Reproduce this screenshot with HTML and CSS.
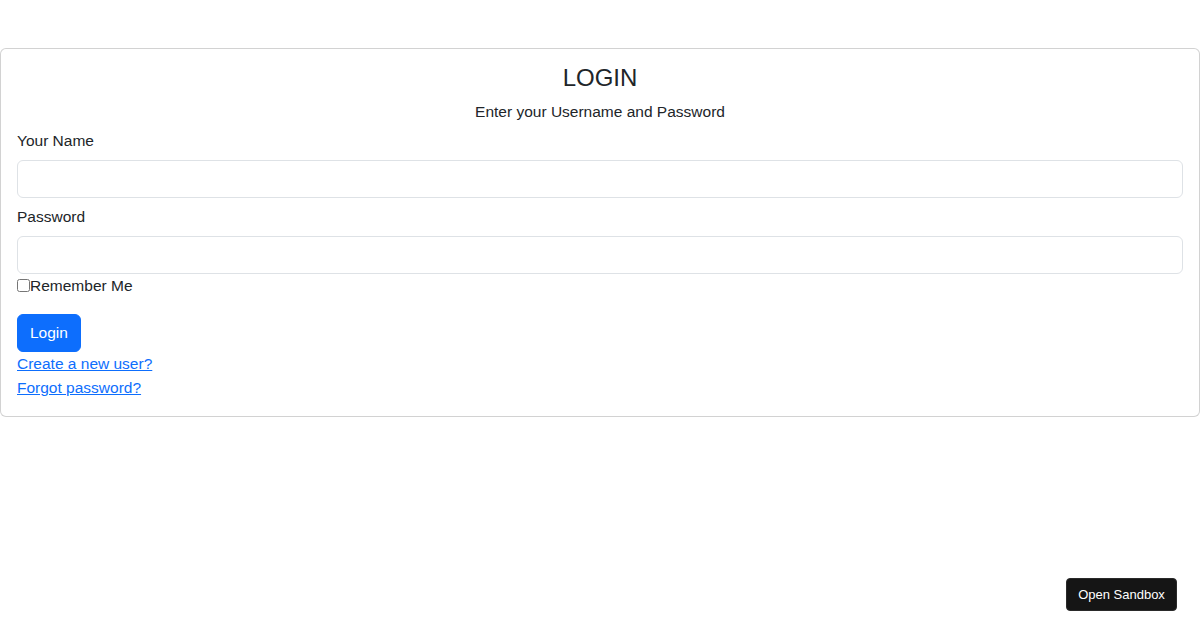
FILE: index.html
```html
<!DOCTYPE html>
<html lang="en">
<head>
<meta charset="utf-8">
<title>Login</title>
<link rel="stylesheet" href="styles.css">
</head>
<body>
<div class="page">
  <div class="card">
    <div class="card-body">
      <h3 class="title">LOGIN</h3>
      <p class="subtitle">Enter your Username and Password</p>
      <form class="form">
        <label class="form-label" for="name">Your Name</label>
        <input class="form-control" id="name" type="text">
        <label class="form-label" for="pw">Password</label>
        <input class="form-control" id="pw" type="password">
        <div class="remember"><input type="checkbox" id="rem" class="check"><label for="rem">Remember Me</label></div>
        <button type="button" class="btn">Login</button>
      </form>
      <a class="link" href="#">Create a new user?</a>
      <a class="link" href="#">Forgot password?</a>
    </div>
  </div>
</div>
<button type="button" class="sandbox">Open Sandbox</button>
</body>
</html>
```
FILE: styles.css
```css
* { box-sizing: border-box; }
html, body { margin: 0; padding: 0; }
body {
  font-family: "Liberation Sans", Arial, sans-serif;
  font-size: 15.5px;
  line-height: 24px;
  color: #212529;
  background: #fff;
}
.page { padding-top: 48px; }
.card {
  border: 1px solid rgba(0,0,0,0.175);
  border-radius: 6px;
  background: #fff;
}
.card-body { padding: 15px 16px 16px; }
.title {
  margin: 0 0 7px;
  font-size: 24px;
  line-height: 28.8px;
  font-weight: 400;
  text-align: center;
}
.subtitle {
  margin: 0 0 5.2px;
  text-align: center;
}
.form { display: flex; flex-direction: column; align-items: flex-start; }
.form-label { display: block; margin-bottom: 7px; }
.form-control {
  display: block;
  width: 100%;
  height: 38px;
  padding: 6px 12px;
  font: inherit;
  color: #212529;
  border: 1px solid #dee2e6;
  border-radius: 6px;
  background: #fff;
  margin: 0 0 7px;
}
#pw { margin-bottom: 0; }
.remember { display: flex; align-items: center; height: 24px; margin-bottom: 16px; }
.check { margin: 0; width: 13px; height: 13px; }
.btn {
  font: inherit;
  color: #fff;
  background: #0d6efd;
  border: 1px solid #0d6efd;
  border-radius: 6px;
  padding: 6px 12px;
  height: 38px;
  line-height: 24px;
}
.link {
  display: block;
  width: max-content;
  color: #0d6efd;
  text-decoration: underline;
}
.sandbox {
  position: fixed;
  right: 23px;
  bottom: 19px;
  width: 111px;
  height: 33px;
  background: #151515;
  color: #fff;
  border: 1px solid #2a2a2a;
  border-radius: 4px;
  font-family: "Liberation Sans", Arial, sans-serif;
  font-size: 13px;
  padding: 0;
}
```
